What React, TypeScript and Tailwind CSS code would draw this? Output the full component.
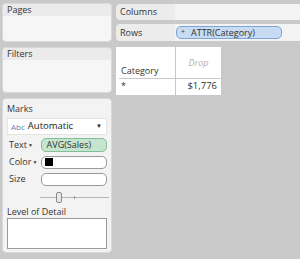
const font = { fontFamily: '"Open Sans", "Noto Sans", sans-serif' };

function Panel({ title, className, children }: { title: string; className: string; children?: React.ReactNode }) {
  return (
    <div className={`flex flex-col rounded-[4px] border border-[#d9d9d9] bg-[#f6f6f6] overflow-hidden ${className}`}>
      <div className="h-[12px] bg-[#ebebeb] pl-[4px] text-[9px] leading-[12px] text-[#333]">{title}</div>
      <div className="flex-1">{children}</div>
    </div>
  );
}

function MarkRow({ label, caret, children }: { label: string; caret?: boolean; children?: React.ReactNode }) {
  return (
    <div className="flex items-center h-[14px]">
      <div className="w-[35px] pl-[2px] text-[9px] text-[#333] flex items-center">
        {label}
        {caret && <span className="ml-[1px] text-[5px] leading-none">▼</span>}
      </div>
      {children}
    </div>
  );
}

export default function App() {
  return (
    <div className="w-[300px] h-[259px] bg-[#c9c9c9] flex pl-[2px] pt-[3px] gap-[4px]" style={font}>
      {/* left side panels */}
      <div className="w-[110px] flex flex-col gap-[5px]">
        <Panel title="Pages" className="h-[39px]" />
        <Panel title="Filters" className="h-[46px]" />
        <div className="h-[155px] rounded-[4px] border border-[#d9d9d9] bg-[#f3f3f3] px-[4px] pt-[3px] flex flex-col">
          <div className="text-[9px] leading-[13px] text-[#333]">Marks</div>
          <div className="mt-[3px] h-[17px] bg-white border border-[#e4e4e4] flex items-center pl-[3px] pr-[4px]">
            <span className="text-[8px] text-[#5a7fb0]">Abc</span>
            <span className="ml-[3px] text-[9.5px] text-[#222]">Automatic</span>
            <span className="ml-auto text-[6px] text-[#222]">▼</span>
          </div>
          <div className="mt-[3px] flex flex-col gap-[3px]">
            <MarkRow label="Text" caret>
              <div className="w-[69px] h-[14px] rounded-[5px] bg-[#c5e5cf] border border-[#83be9a] pl-[5px] text-[9px] leading-[12px] text-[#333]">
                AVG(Sales)
              </div>
            </MarkRow>
            <MarkRow label="Color" caret>
              <div className="w-[69px] h-[13px] rounded-[5px] bg-white border border-[#9a9a9a] flex items-center pl-[3px]">
                <div className="w-[8px] h-[8px] bg-black" />
              </div>
            </MarkRow>
            <MarkRow label="Size">
              <div className="w-[69px] h-[13px] rounded-[5px] bg-white border border-[#9a9a9a]" />
            </MarkRow>
          </div>
          <div className="mt-[6px] ml-[33px] w-[69px] h-[11px] relative flex items-center">
            <div className="w-full h-[1px] bg-[#b5b5b5]" />
            <div className="absolute left-[34px] top-[4px] w-[1px] h-[3px] bg-[#999]" />
            <div className="absolute left-[16px] top-0 w-[6px] h-[11px] rounded-[2px] border border-[#8a8a8a] bg-[#e8e8e8]" />
          </div>
          <div className="mt-[3px] text-[9px] leading-[12px] text-[#333]">Level of Detail</div>
          <div className="h-[31px] bg-white border border-[#9a9a9a]" />
        </div>
      </div>

      {/* right side shelves and view */}
      <div className="flex-1 flex flex-col pt-[1px]">
        <div className="flex h-[16px] rounded-l-[4px] overflow-hidden">
          <div className="w-[59px] bg-[#ececec] pl-[4px] text-[9px] leading-[16px] text-[#333]">Columns</div>
          <div className="flex-1 bg-[#f3f3f3]" />
        </div>
        <div className="mt-[4px] flex h-[17px] rounded-l-[4px] overflow-hidden">
          <div className="w-[59px] bg-[#ececec] pl-[4px] text-[9px] leading-[17px] text-[#333]">Rows</div>
          <div className="flex-1 bg-[#f3f3f3] flex items-center pl-[1px]">
            <div className="w-[106px] h-[13px] rounded-[5px] bg-[#c7dbf2] border border-[#7fa3d3] flex items-center pl-[4px] text-[9px] text-[#333]">
              <span className="text-[7px] mr-[6px]">+</span>
              ATTR(Category)
            </div>
          </div>
        </div>
        <div className="mt-[6px] w-[105px] h-[48px] bg-white grid grid-cols-[60px_45px] grid-rows-[31px_17px]">
          <div className="pl-[5px] flex items-end pb-[1px] text-[9px] text-[#333] border-r border-[#c8c8c8]">Category</div>
          <div className="flex items-center justify-center italic text-[9px] text-[#b0b0b0]">Drop</div>
          <div className="ml-[3px] pl-[2px] border-t border-r border-[#c8c8c8] text-[9px] leading-[14px] text-[#333]">*</div>
          <div className="border-t border-[#c8c8c8] text-right pr-[4px] text-[9.5px] leading-[14px] text-[#333]">$1,776</div>
        </div>
      </div>
    </div>
  );
}
